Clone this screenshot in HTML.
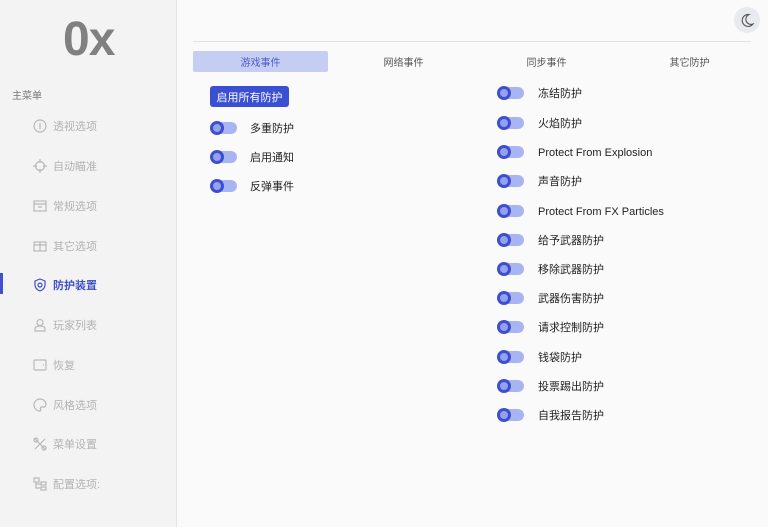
<!DOCTYPE html>
<html><head><meta charset="utf-8"><style>
*{margin:0;padding:0;box-sizing:border-box}
body{width:768px;height:527px;overflow:hidden;background:#fafafa;font-family:"Liberation Sans","Noto Sans CJK SC",sans-serif;position:relative}
.side{position:absolute;left:0;top:0;width:177px;height:527px;background:#f3f3f3;border-right:1px solid #e6e6e6}
.logo{position:absolute;left:63px;top:12px;font-size:48px;font-weight:bold;color:#808080;letter-spacing:-1px}
.menu{position:absolute;left:12px;top:87px;font-size:10px;color:#777;font-weight:normal}
.it{position:absolute;left:33px;height:20px;display:flex;align-items:center;font-size:11px;color:#b3b3b3}
.it svg{width:14px;height:14px;margin-right:6px;stroke:#b8b8b8;fill:none;stroke-width:1.2}
.it.act{color:#3f51c8;font-weight:bold}
.it.act svg{stroke:#3f51c8}
.bar{position:absolute;left:0;top:273px;width:3px;height:21px;background:#3f51d0}
.line{position:absolute;left:193px;top:41px;width:558px;height:1px;background:#e3e3e3}
.moon{position:absolute;left:734px;top:7px;width:26px;height:26px;border-radius:50%;background:#e8eaf0}
.tab{position:absolute;top:51px;height:21px;width:135px;font-size:10px;color:#555;display:flex;align-items:center;justify-content:center}
.tab.on{background:#c5cdf2;color:#4d5ec9;border-radius:2px}
.btn{position:absolute;left:210px;top:86px;width:79px;height:21px;background:#3b4fd2;border-radius:3px;color:#fff;font-size:11px;display:flex;align-items:center;justify-content:center}
.tg{position:absolute;height:14px;width:28px}
.tg .tr{position:absolute;left:3px;top:1px;width:24px;height:12px;border-radius:6px;background:#a9b4f2}
.tg .k{position:absolute;left:0;top:0;width:14px;height:14px;border-radius:50%;background:#94a1ee;border:3px solid #3d4fcf}
.lb{position:absolute;font-size:11px;color:#222;line-height:14px}
</style></head><body>
<div class="side">
<div class="logo">0x</div>
<div class="menu">主菜单</div>
<div class="it" style="top:116px"><svg viewBox="0 0 14 14"><circle cx="7" cy="7" r="6"/><path d="M7 4v6"/></svg>透视选项</div>
<div class="it" style="top:156px"><svg viewBox="0 0 14 14"><circle cx="7" cy="7" r="4.5"/><path d="M7 0v4M7 10v4M0 7h4M10 7h4"/></svg>自动瞄准</div>
<div class="it" style="top:196px"><svg viewBox="0 0 14 14"><rect x="1" y="2" width="12" height="10"/><path d="M1 5h12M5 8h4"/></svg>常规选项</div>
<div class="it" style="top:236px"><svg viewBox="0 0 14 14"><rect x="1" y="3" width="12" height="9"/><path d="M1 6h12M7 3v9"/></svg>其它选项</div>
<div class="it act" style="top:275px"><svg viewBox="0 0 14 14"><path d="M7 1l5 2v4c0 3-2.5 5-5 6-2.5-1-5-3-5-6V3z"/><circle cx="7" cy="7" r="2"/></svg>防护装置</div>
<div class="it" style="top:315px"><svg viewBox="0 0 14 14"><circle cx="7" cy="4.5" r="3"/><path d="M2 13v-2c0-2 2-3 5-3s5 1 5 3v2z"/></svg>玩家列表</div>
<div class="it" style="top:355px"><svg viewBox="0 0 14 14"><rect x="1" y="2" width="12" height="10" rx="1"/><path d="M10 7h1"/></svg>恢复</div>
<div class="it" style="top:395px"><svg viewBox="0 0 14 14"><path d="M7 1a6 6 0 1 0 0 12c1 0 1-1 .5-2s0-2 1.5-2h2c1 0 2-1 2-2.5C13 3.5 10.5 1 7 1z"/></svg>风格选项</div>
<div class="it" style="top:434px"><svg viewBox="0 0 14 14"><path d="M2 2l10 10M12 2L2 12"/><circle cx="3" cy="3" r="2"/><circle cx="11" cy="11" r="2"/></svg>菜单设置</div>
<div class="it" style="top:474px"><svg viewBox="0 0 14 14"><rect x="1" y="1" width="5" height="4"/><rect x="8" y="5" width="5" height="3"/><rect x="8" y="10" width="5" height="3"/><path d="M3 5v6h5M3 7h5"/></svg>配置选项:</div>
</div>
<div class="bar"></div>
<div class="moon"><svg width="26" height="26" viewBox="0 0 26 26"><path d="M15 7.5a6 6 0 1 0 4 9.5a5 5 0 0 1-4-9.5z" fill="none" stroke="#555" stroke-width="1.1"/></svg></div>
<div class="line"></div>
<div class="tab on" style="left:193px">游戏事件</div>
<div class="tab" style="left:336px">网络事件</div>
<div class="tab" style="left:479px">同步事件</div>
<div class="tab" style="left:622px">其它防护</div>
<div class="btn">启用所有防护</div>

<div class="tg" style="left:210px;top:121px"><div class="tr"></div><div class="k"></div></div><div class="lb" style="left:250px;top:122px">多重防护</div>
<div class="tg" style="left:210px;top:150px"><div class="tr"></div><div class="k"></div></div><div class="lb" style="left:250px;top:151px">启用通知</div>
<div class="tg" style="left:210px;top:179px"><div class="tr"></div><div class="k"></div></div><div class="lb" style="left:250px;top:180px">反弹事件</div>

<div class="tg" style="left:497px;top:86px"><div class="tr"></div><div class="k"></div></div><div class="lb" style="left:538px;top:87px">冻结防护</div>
<div class="tg" style="left:497px;top:116px"><div class="tr"></div><div class="k"></div></div><div class="lb" style="left:538px;top:117px">火焰防护</div>
<div class="tg" style="left:497px;top:145px"><div class="tr"></div><div class="k"></div></div><div class="lb" style="left:538px;top:146px">Protect From Explosion</div>
<div class="tg" style="left:497px;top:174px"><div class="tr"></div><div class="k"></div></div><div class="lb" style="left:538px;top:175px">声音防护</div>
<div class="tg" style="left:497px;top:204px"><div class="tr"></div><div class="k"></div></div><div class="lb" style="left:538px;top:205px">Protect From FX Particles</div>
<div class="tg" style="left:497px;top:233px"><div class="tr"></div><div class="k"></div></div><div class="lb" style="left:538px;top:234px">给予武器防护</div>
<div class="tg" style="left:497px;top:262px"><div class="tr"></div><div class="k"></div></div><div class="lb" style="left:538px;top:263px">移除武器防护</div>
<div class="tg" style="left:497px;top:291px"><div class="tr"></div><div class="k"></div></div><div class="lb" style="left:538px;top:292px">武器伤害防护</div>
<div class="tg" style="left:497px;top:320px"><div class="tr"></div><div class="k"></div></div><div class="lb" style="left:538px;top:321px">请求控制防护</div>
<div class="tg" style="left:497px;top:350px"><div class="tr"></div><div class="k"></div></div><div class="lb" style="left:538px;top:351px">钱袋防护</div>
<div class="tg" style="left:497px;top:379px"><div class="tr"></div><div class="k"></div></div><div class="lb" style="left:538px;top:380px">投票踢出防护</div>
<div class="tg" style="left:497px;top:408px"><div class="tr"></div><div class="k"></div></div><div class="lb" style="left:538px;top:409px">自我报告防护</div>
</body></html>
